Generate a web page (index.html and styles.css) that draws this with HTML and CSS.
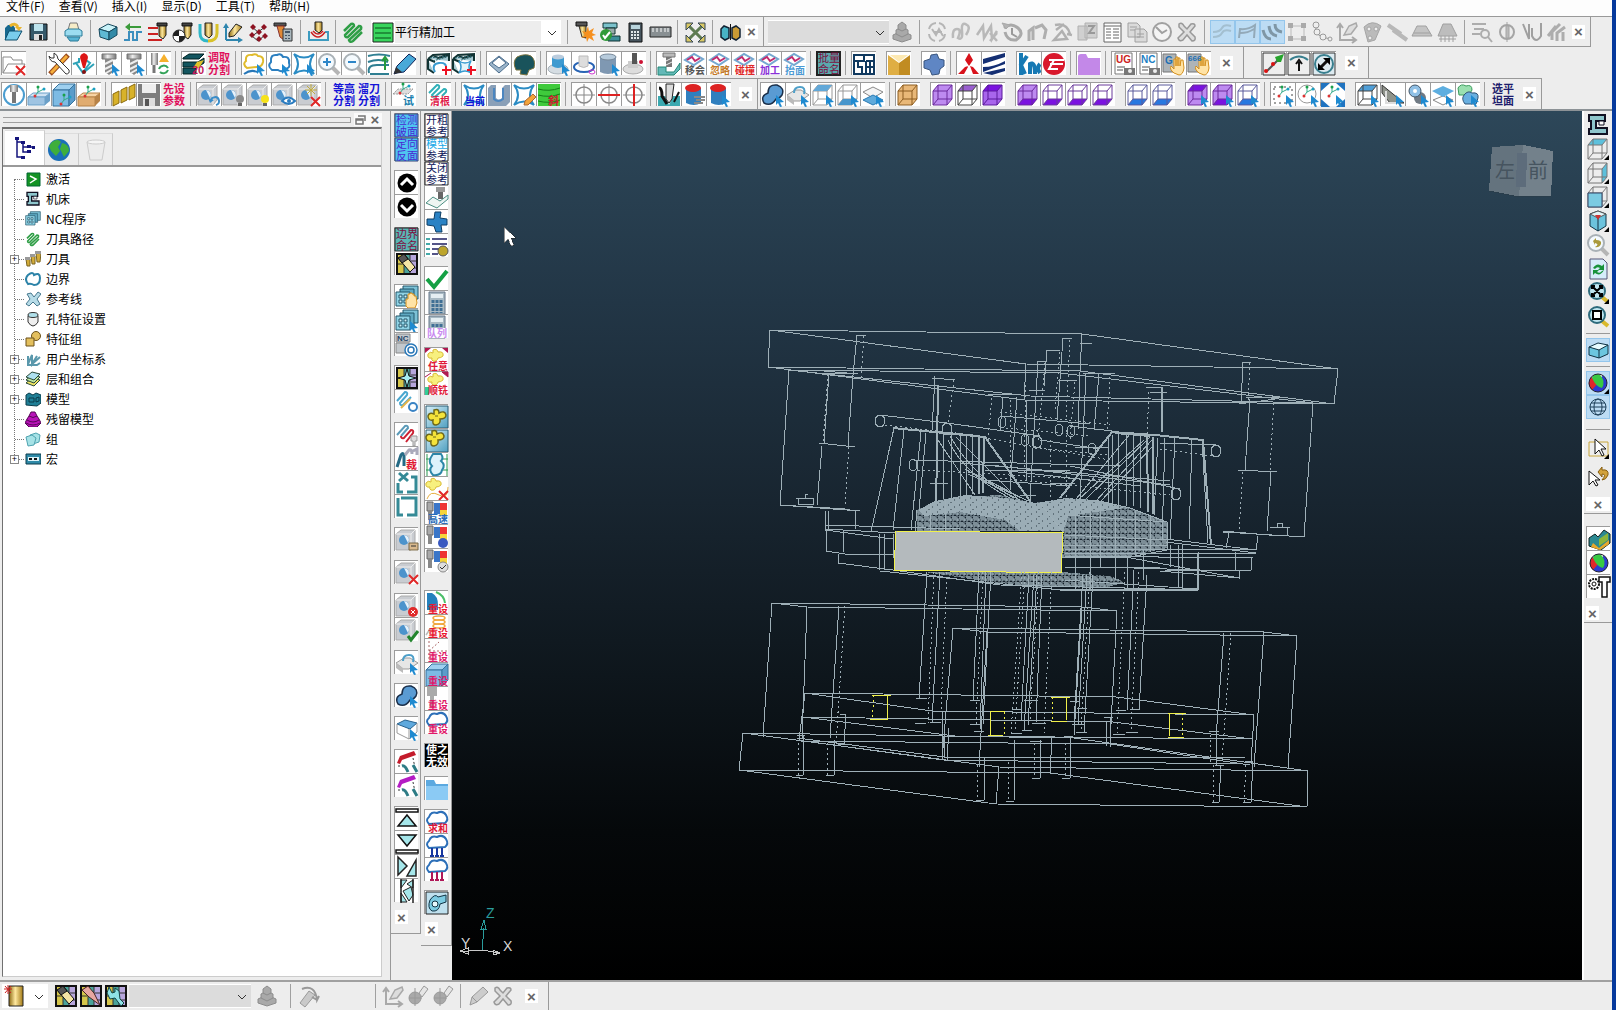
FILE: index.html
```html
<!DOCTYPE html>
<html lang="zh-CN">
<head>
<meta charset="utf-8">
<title>CAM</title>
<link rel="stylesheet" href="styles.css">
</head>
<body>
<svg class="sprite" aria-hidden="true">
<defs>
<linearGradient id="gold" x1="0" x2="1"><stop offset="0" stop-color="#8d6b14"/><stop offset=".45" stop-color="#ffe9a0"/><stop offset="1" stop-color="#a37a16"/></linearGradient>
<linearGradient id="steel" x1="0" x2="1"><stop offset="0" stop-color="#777"/><stop offset=".4" stop-color="#eee"/><stop offset="1" stop-color="#777"/></linearGradient>
<linearGradient id="sky" x1="0" y1="0" x2="1" y2="1"><stop offset="0" stop-color="#d9f0f8"/><stop offset="1" stop-color="#4e9fc0"/></linearGradient>
<pattern id="mesh" width="7" height="6" patternUnits="userSpaceOnUse"><path d="M0 0h7M0 2h5M1 4h6M1 0v6M3 0v4M5 1v5M6 2v3" stroke="#9fb2bb" stroke-width="1"/></pattern>
<pattern id="dense" width="11" height="7" patternUnits="userSpaceOnUse"><rect width="11" height="7" fill="#9badb6"/><path d="M2 1h1M8 3h1M5 5v1" stroke="#2a3943"/></pattern>

<g id="open"><path d="M4 8l3-3h5l2 3v12H4z" fill="#17688e"/><path d="M4 20l4-9h13l-5 9z" fill="#79cdec" stroke="#0d4d6b"/><path d="M9 6q5-4 8 1" stroke="#e9b52e" stroke-width="3" fill="none"/><path d="M14 7h7l-3 4z" fill="#e9b52e"/></g>
<g id="save"><path d="M4 4h17v16H4z" fill="#35596a" stroke="#111"/><path d="M8 4h9v7H8z" fill="#bde4ee"/><path d="M8 14h9v6H8z" fill="#ddd"/><path d="M13 15h3v5h-3z" fill="#222"/></g>
<g id="print"><path d="M7 10l2-7h7l2 7z" fill="#f6ecc8" stroke="#777"/><path d="M4 11l3-2h11l3 2v5H4z" fill="#9bdcf0" stroke="#2b7c99"/><path d="M6 17h13l-2 4H9z" fill="#58b4d4" stroke="#2b7c99"/></g>
<g id="block"><path d="M3 9l9-5 9 3-8 5z" fill="#c9f2f8" stroke="#17485c"/><path d="M3 9l10 3v8L4 17z" fill="#5fb9d3" stroke="#17485c"/><path d="M13 12l8-5v8l-8 5z" fill="#338ba8" stroke="#17485c"/></g>
<g id="rapid" fill="none"><path d="M3 20h5v-8h4v8h4v-8h5" stroke="#3c8fbe" stroke-width="2"/><path d="M20 7H8" stroke="#3b9b3b" stroke-width="2"/><path d="M9 3v8L4 7z" fill="#3b9b3b"/></g>
<g id="tool"><path d="M11 3h10v3H11z" fill="#444" stroke="#111"/><path d="M13 6h7v9l-3 4-4-3z" fill="url(#gold)" stroke="#222"/></g>
<g id="feeds"><path d="M2 8h10M2 14h10M2 20h14" stroke="#c22" stroke-width="2"/><use href="#tool"/></g>
<g id="ball"><use href="#tool"/><circle cx="8" cy="16" r="6" fill="#fff" stroke="#222"/><path d="M8 16V10a6 6 0 0 0-6 6zM8 16v6a6 6 0 0 0 6-6z" fill="#222"/></g>
<g id="leads" fill="none"><path d="M4 4v9q0 8 8 8" stroke="#2fb7c8" stroke-width="3"/><path d="M21 4v9q0 8-9 8" stroke="#d8c22a" stroke-width="3"/><path d="M9 3h7v12l-3 3-4-3z" fill="url(#gold)" stroke="#222"/></g>
<g id="axes"><path d="M5 20V6M5 20h15" stroke="#2e86ae" stroke-width="2"/><path d="M5 3l3 5H2zM22 20l-5 3v-6z" fill="#2e86ae"/><path d="M8 13l7-9 6 3-8 9-5 1z" fill="url(#gold)" stroke="#222"/></g>
<g id="dots"><path d="M6 7l6 5 7-5M12 12l-6 4 6 5 7-6" stroke="#333" fill="none"/><path d="M4 7l3-3 3 3-3 3zM15 7l3-3 3 3-3 3zM10 12l3-3 3 3-3 3zM3 15l3-3 3 3-3 3zM16 16l3-3 3 3-3 3zM10 19l3-3 3 3-3 3z" fill="#8d1322"/></g>
<g id="toolcalc"><path d="M3 3h12v3H3z" fill="#555" stroke="#222"/><path d="M6 6h7v14l-4-3z" fill="#e08936" stroke="#833"/><path d="M12 9h9v12h-9z" fill="#a9b7bd" stroke="#333"/><path d="M14 11h5v2h-5zM14 15h2v1h-2zM17 15h2v1h-2zM14 18h2v1h-2zM17 18h2v1h-2z" fill="#456"/></g>
<g id="sim" fill="none"><path d="M3 11v9h19v-8h-3" stroke="#3c9bc0" stroke-width="2"/><path d="M5 12q7 10 14 0M7 11q5 6 10 0" stroke="#c22" stroke-width="1.5"/><path d="M9 2h7v8l-3 3-4-3z" fill="url(#gold)" stroke="#222"/></g>
<g id="path" fill="none" stroke="#2f9e46" stroke-width="2.500"><path d="M3 11l7-7q3-1 3 2l-9 9q0 3 3 2L18 6q3 0 2 3L8 20q1 3 4 1l9-9"/></g>
<g id="pathrows"><path d="M2 3h20v19H2z" fill="#39d65d" stroke="#222"/><path d="M4 8h16M4 13h16M4 18h16" stroke="#0b4f1b"/></g>
<g id="toolstar"><path d="M3 2h11v4H3z" fill="#555" stroke="#111"/><path d="M6 6h7v12l-4-1z" fill="url(#gold)" stroke="#333"/><path d="M15 6l1 5 5-3-2 5 4 2-4 1 2 5-5-3-2 4-1-5-5 1 4-3-3-4 4 1z" fill="#f6901e"/></g>
<g id="toolcheck"><path d="M5 3h14v5H5z" fill="#7bc2cc" stroke="#133"/><path d="M8 8h9v6H8z" fill="#9aa" stroke="#133"/><path d="M10 16h12v5H10z" fill="#3d8e9a" stroke="#133"/><circle cx="8" cy="15" r="6" fill="#2f9b37"/><path d="M5 15l2 3 5-6" stroke="#fff" stroke-width="2" fill="none"/></g>
<g id="calc"><path d="M6 3h13v19H6z" fill="#47555e" stroke="#111"/><path d="M8 5h9v4H8z" fill="#b9d4dc"/><path d="M9 11v9M12 11v9M15 11v9" stroke="#dfe7ea" stroke-width="2" stroke-dasharray="2 1"/></g>
<g id="ruler"><path d="M2 7h21v10H2z" fill="#888f92" stroke="#222"/><path d="M5 8v4M9 8v4M13 8v4M17 8v4M20 8v4" stroke="#fff"/></g>
<g id="expand"><path d="M5 5l15 15M20 5L5 20" stroke="#5d7a50" stroke-width="3"/><path d="M3 3h7l-7 7zM22 3v7l-7-7zM3 22v-7l7 7zM22 22h-7l7-7z" fill="#d8c864" stroke="#345"/></g>
<g id="mirror"><path d="M3 9l3-3 5 2v10l-4 2-4-3z" fill="#48b3c6" stroke="#123" stroke-width="1.500"/><path d="M14 8l4-2 4 3v8l-4 3-4-2z" fill="#c99a34" stroke="#123" stroke-width="1.500"/><path d="M12.500 4v16" stroke="#111"/></g>
<g id="pile" fill="#a9a9a9" stroke="#8c8c8c"><path d="M3 15l9-4 9 4v4l-9 3-9-3z"/><path d="M6 10l6-3 6 3v4l-6 3-6-3z"/><path d="M8 5l4-3 4 3v4l-4 2-4-2z"/></g>
<g id="cycle" fill="none" stroke="#b5b5b5" stroke-width="2"><path d="M4 9a8 8 0 0 1 7-6M14 3a8 8 0 0 1 6 6M20 14a8 8 0 0 1-6 7M10 21a8 8 0 0 1-6-7M7 9l4 6 3-6 4 7M8 12h9"/></g>
<g id="wave" fill="none" stroke="#bababa" stroke-width="2.500"><path d="M3 18q-1-9 4-9t1 9q5 3 4-7t5-6q4 2-1 10"/></g>
<g id="wavex" fill="none" stroke="#b8b8b8" stroke-width="2.500"><path d="M2 15l6-9 1 12 7-12 1 13 5-8M15 13l7 8M22 13l-7 8"/></g>
<g id="rot" fill="none" stroke="#a9a9a9" stroke-width="3"><path d="M4 8q7-6 14 0t-2 12q-9 1-11-8"/><path d="M12 8v6l5 3" stroke="#999" stroke-width="2"/><path d="M2 3l4 6 4-4z" fill="#b3b3b3" stroke-width="1"/></g>
<g id="arch" fill="none" stroke="#aeaeae" stroke-width="3"><path d="M4 21V11l4-3v12M10 8l7-3 4 5-2 9"/></g>
<g id="swap" fill="none" stroke="#b0b0b0" stroke-width="2.500"><path d="M5 5q12-3 15 9M4 20l8-9 5 8zM6 10l8-6M17 14l5 1"/></g>
<g id="sheet" fill="#d0d0d0" stroke="#b0b0b0"><path d="M3 6h9v14H3zM10 3h12v15H10z"/><path d="M13 6h6l-5 7h6" fill="none" stroke="#999" stroke-width="2"/></g>
<g id="list" fill="#fff" stroke="#666"><path d="M4 3h17v19H4z"/><path d="M4 6h17M6 9h5M13 9h6M6 12h5M13 12h6M6 15h5M13 15h6M6 18h5M13 18h6"/></g>
<g id="copy" fill="#dadada" stroke="#a0a0a0"><path d="M3 3h9l3 3v11H3zM10 9h9l3 3v10H10z"/><path d="M5 7h7M5 10h5M12 14h7M12 17h7"/></g>
<g id="clock" fill="#f4f4f4" stroke="#a0a0a0" stroke-width="2"><circle cx="12" cy="12" r="9"/><path d="M6 7l6 6 5-3" fill="none"/></g>
<g id="xx" fill="#ddd" stroke="#999" stroke-width="1.500"><path d="M4 4q3-2 5 2l3 3 4-5q4-1 4 2l-5 6 5 5q1 4-3 4l-5-6-4 5q-4 2-5-2l6-6-5-5z"/></g>
<g id="hl-lines" fill="none" stroke="#a3bfd0" stroke-width="2"><path d="M3 17q7 0 9-4t9-2M3 12q7 0 9-4t9-2"/></g>
<g id="hl-arm" fill="none" stroke="#93a9b8" stroke-width="2"><path d="M4 18l1-9q8 1 15-4l-1 13M5 13q8 0 14-4"/></g>
<g id="hl-arcs" fill="none" stroke="#7f97a6" stroke-width="3"><path d="M3 10q2 9 8 9M9 6q1 9 8 10M15 4q0 7 7 8"/></g>
<g id="nodes"><path d="M6 6h13M6 19h13M6 6v13M19 6v13" stroke="#bbb"/><path d="M3 3h5v5H3zM16 3h5v5h-5zM3 16h5v5H3zM16 16h5v5h-5z" fill="#aaa"/></g>
<g id="curve" fill="#eee" stroke="#999"><path d="M6 6q-3 11 15 13" fill="none"/><circle cx="6" cy="5" r="3"/><circle cx="7" cy="12" r="3"/><circle cx="13" cy="17" r="3"/><circle cx="20" cy="19" r="2"/></g>
<g id="axpen" fill="none" stroke="#a9a9a9" stroke-width="2"><path d="M5 4v16h16M2 8l3-4 3 4M17 17l4 3-4 3"/><path d="M9 15l5-9 7-3 1 3-6 8z" fill="#ddd" stroke-width="1.500"/></g>
<g id="fan" fill="#bbb" stroke="#a5a5a5"><path d="M4 7q8-8 17-1l-6 14-7 2z"/><circle cx="9" cy="9" r="2" fill="#eee"/><circle cx="16" cy="9" r="2" fill="#eee"/><circle cx="10" cy="18" r="2" fill="#eee"/></g>
<g id="slash" stroke="#b8b8b8" stroke-width="4"><path d="M3 5l13 9M8 10l14 10"/></g>
<g id="trap" fill="#c4c4c4" stroke="#a0a0a0"><path d="M7 6h9l6 10H2zM4 13h16"/></g>
<g id="trap2" fill="#bdbdbd" stroke="#a0a0a0"><path d="M8 4h8l6 12H3z"/><path d="M4 19h17M6 16v6M10 16v6M14 16v6M18 16v6"/></g>
<g id="find" fill="none" stroke="#adadad" stroke-width="2"><path d="M2 4h14M4 9h10M2 14h8"/><circle cx="15" cy="14" r="4"/><path d="M18 17l4 5"/></g>
<g id="circ" fill="none" stroke="#a5a5a5"><circle cx="12" cy="12" r="7" stroke-width="2"/><path d="M12 2v20"/><path d="M11 6h3v12h-3z" fill="#bbb"/></g>
<g id="uu" fill="none" stroke="#a0a0a0" stroke-width="2"><path d="M3 4l6 15V4M12 8v8q4 8 9 0V3"/></g>
<g id="hatch" fill="none" stroke="#adadad" stroke-width="3"><path d="M3 16l8-10M7 20V12l8-8M12 21v-8l8-6M18 21v-9"/></g>
<g id="pencil" fill="#ccc" stroke="#999"><path d="M4 21l2-8L17 3l5 5L11 18z"/><path d="M6 13l5 5" fill="none"/></g>

<g id="arrow"><path d="M15 12l8 7-4 .5 2 4-2 .5-2-4-2 2z" fill="#1f8ad0"/></g>
<g id="redx"><path d="M14 14l9 9M23 14l-9 9" stroke="#e02828" stroke-width="2"/></g>
<g id="folderx"><path d="M1 21V5h8l2 3h9v4M1 21l5-9h17l-5 9z" fill="none" stroke="#8a8a8a"/><use href="#redx"/></g>
<g id="wrench"><path d="M3 22L21 3" stroke="#9a4a1b" stroke-width="5"/><path d="M4 21L20 4" stroke="#f5ae3c" stroke-width="3"/><path d="M2 4q1 6 6 6l11 12q4 0 3-4L11 7q0-4-4-6v5H4z" fill="#fff" stroke="#333"/></g>
<g id="pinred"><path d="M4 11l7 10 11-9M1 12l6-2v-4M14 8l4 3-7 9" fill="none" stroke="#2ea3b8" stroke-width="2"/><path d="M12 1q6 2 3 8l-2 7h-2L9 9q-3-6 3-8z" fill="#dd1515"/><circle cx="12" cy="20" r="2" fill="#811"/></g>
<g id="drill"><path d="M5 2h14v5H5z" fill="url(#steel)" stroke="#777"/><path d="M8 7h8v13l-4 3-4-3z" fill="#888"/><path d="M8 12l8-4M8 17l8-4M9 21l7-4" stroke="#eee" stroke-width="2"/></g>
<g id="drillc"><use href="#drill"/><use href="#arrow"/></g>
<g id="drillw"><path d="M4 1h7v12H4z" fill="url(#steel)"/><path d="M7 13v8" stroke="#777" stroke-width="3"/><path d="M17 2l5 8H12z" fill="#f6b02c"/><path d="M12 17a5 5 0 0 1 9-1M21 18a5 5 0 0 1-8 2" fill="none" stroke="#35a35a" stroke-width="2"/></g>
<g id="stack"><path d="M1 6l6-4h15l-5 5H1zM1 16h13v6H1zM1 10h15l6-4v5l-6 4H1z" fill="#12555f" stroke="#022"/><path d="M15 10l7-2-5 8h-6z" fill="#e0c22a"/></g>
<g id="cloud"><path d="M5 18q-5-4-1-8-1-8 6-7 4-2 6 2 7-1 6 6 2 5-4 6-3 4-7 1z" fill="none" stroke-width="2"/></g>
<g id="cloudy"><path d="M5 16q-5-4-1-7-1-7 6-6 4-2 6 1 6 0 5 6-1 5-6 5z" fill="none" stroke="#e0bb2c" stroke-width="2"/><path d="M2 22q7-5 13-2" stroke="#2777b8" fill="none" stroke-width="2"/><use href="#arrow"/></g>
<g id="cloudb"><use href="#cloud" stroke="#2b7fc0"/><use href="#arrow"/></g>
<g id="star4"><path d="M2 2q10 7 20 0q-8 10 0 20q-10-7-20 0q8-10 0-20z" fill="none" stroke="#2b8cc4" stroke-width="2"/></g>
<g id="mag"><path d="M15 15l7 7" stroke="#b5b5b5" stroke-width="4"/><circle cx="10" cy="10" r="8" fill="#f4fafe" stroke="#a9b1b6" stroke-width="2"/></g>
<g id="flow" fill="none" stroke="#2f7f92" stroke-width="2"><path d="M1 4q11-3 22 0M1 10q11-4 20 0M2 21q-2-8 8-8h12M3 22h19"/><path d="M18 18V7M15 9l3-4 3 4" stroke="#249a3b"/></g>
<g id="pen"><path d="M2 22l3-8L17 2l7 5-12 13-7 1z" fill="#49a9d8" stroke="#125"/><path d="M2 22l2-7 6 5z" fill="#333"/></g>
<g id="dblock"><path d="M1 7l5-4 16-1v7M1 7v10l6 4M1 7l7 3M6 3l5 3 11-3" fill="#a6c9d1" stroke="#133" stroke-width="2"/><path d="M3 6l16-2M6 9l14-4" stroke="#2c6a75" stroke-dasharray="2 1"/></g>
<g id="redplus"><path d="M19 14v9M15 18h9" stroke="#e12" stroke-width="2"/></g>
<g id="rhomb"><path d="M12 4l10 8-10 9L2 12z" fill="#9db6cb" stroke="#4d6f8f"/><path d="M12 5l7 6-7 5-7-5z" fill="#fff" stroke="#4d6f8f"/></g>
<g id="darkblob"><path d="M4 18q-4-8 1-13 8-4 14-1 5 4 3 12l-5 2-2 5-7-1 1-4z" fill="#19535b" stroke="#7c7440" stroke-width="1"/></g>
<g id="disc"><ellipse cx="11" cy="17" rx="10" ry="5" fill="#d5dde3" stroke="#a6b0b8"/><path d="M5 5h12v9q-6 4-12 0z" fill="#3e9ad0"/><ellipse cx="11" cy="5" rx="6" ry="2.500" fill="#bcd"/></g>
<g id="ring"><ellipse cx="12" cy="15" rx="10" ry="5" fill="none" stroke="#2763b4" stroke-width="2"/><path d="M7 4h9v10q-4 3-9 0z" fill="#ddd" stroke="#bbb"/><ellipse cx="20" cy="20" rx="3" ry="2" fill="none" stroke="#c3c"/></g>
<g id="cyl"><path d="M3 5v15q8 4 16 0V5z" fill="#7f98b2"/><ellipse cx="11" cy="5" rx="8" ry="3" fill="#b7cbdc" stroke="#789"/></g>
<g id="bcyl"><path d="M4 5v15q8 4 15 0V5z" fill="#2f7fbf"/><ellipse cx="11" cy="5" rx="8" ry="4" fill="#d22"/></g>
<g id="discdrill"><ellipse cx="11" cy="17" rx="10" ry="5" fill="#ddd" stroke="#aaa"/><path d="M6 9h10v7H6z" fill="#ccc"/><path d="M10 1h5v11h-5z" fill="#555"/><circle cx="19" cy="10" r="2" fill="#c13"/></g>
<g id="ucut"><path d="M1 15h8v5h8l6-9v6l-6 6H1z" fill="#64b9b8" stroke="#287" /><path d="M6 1h12v4H6z" fill="#bbb" stroke="#777"/><path d="M9 5h6v10H9z" fill="#777"/><path d="M9 9l6-3M9 13l6-3" stroke="#eee"/></g>
<g id="ppath" fill="none" stroke-width="2"><path d="M3 8l9-6 9 5-9 6z" stroke="#75a8d0"/><path d="M5 8l5-3 3 4 5-3" stroke="#c22a6d"/></g>
<g id="fixture" fill="none" stroke="#10395f" stroke-width="2"><path d="M2 3h20v19H2z" fill="#fff"/><path d="M2 9h4v6h4v7M6 9h6V4M14 9h8M14 15h8M14 9v13M18 9v12"/></g>
<g id="env"><path d="M1 3l11 8v12H1z" fill="#dfae43"/><path d="M23 3l-11 8v12h11z" fill="#c18c22"/><path d="M3 3h18l-9 7z" fill="#fde9b2"/></g>
<g id="plus3d"><path d="M9 3l6-1 2 5 5 1v6l-4 3-1 5-7 1-2-5-6-2V9l6-2z" fill="#5f86c4" stroke="#39557e"/></g>
<g id="mitsu" fill="#d8121b"><path d="M12 1l4 7-4 6-4-6zM8 15h3l-4 7H1zM8 15l3-1-4 8H1zM13 14l3 1 6 7h-6z"/></g>
<g id="wing" fill="#142f73"><path d="M1 7l22-6v4L1 12zM1 15q11 0 22-6v3L1 20zM1 21l22-5v3L10 23z"/></g>
<g id="hnc" fill="none" stroke="#1679b4" stroke-width="4"><path d="M4 1v22M10 4L4 13l4 9M13 22V12q5-3 5 10M23 12q-4 4 0 9"/></g>
<g id="redlogo"><circle cx="12" cy="12" r="11" fill="#d9182c"/><path d="M7 8h15M8 12h13M12 8l-5 9h9" stroke="#fff" stroke-width="2" fill="none"/></g>
<g id="pfolder"><path d="M1 5q0-3 3-3h5l2 4h12v17H1z" fill="#c388e8"/></g>
<g id="card"><path d="M3 1h17v21H3z" fill="#fff" stroke="#777"/><path d="M5 15h8M5 18h6" stroke="#555"/><path d="M12 16h11v7H12z" fill="#777"/><circle cx="18" cy="19" r="2" fill="#eee"/></g>
<g id="hand"><path d="M1 2h13v18H1z" fill="#aeb4b8" stroke="#777"/><path d="M12 21q-5-4-3-7l3 3V7h2v7V5h2v9V6h2v8l1-6h2l1 8q-1 7-5 7z" fill="#ffe3a6" stroke="#d38f1c"/></g>
<g id="seg"><path d="M1 1h22v22H1z" fill="#eee" stroke="#333"/><path d="M4 20L17 7" stroke="#555" stroke-width="2"/><path d="M13 5l9-3-3 8-4 0z" fill="#27a32d"/><circle cx="4" cy="19" r="2" fill="#d11"/><circle cx="11" cy="12" r="2" fill="#d11"/></g>
<g id="uparc"><path d="M1 1h22v22H1z" fill="#eee" stroke="#333"/><path d="M3 8q9-7 18 0" stroke="#397f8e" fill="none" stroke-width="2"/><path d="M12 19V10M9 12l3-4 3 4" stroke="#111" stroke-width="2" fill="none"/></g>
<g id="diam"><path d="M1 1h22v22H1z" fill="#dceaf0" stroke="#333"/><circle cx="12" cy="12" r="9" fill="none" stroke="#397f8e" stroke-width="2"/><path d="M8 16l8-8" stroke="#111" stroke-width="3"/><path d="M11 6h7v7zM6 11v7h7z"/></g>

<g id="drillring"><circle cx="12" cy="12" r="10" fill="none" stroke="#4b9dd0" stroke-width="2"/><path d="M8 2h8v7H8z" fill="url(#steel)"/><path d="M10 9h4v11h-4z" fill="#777"/></g>
<g id="tri"><path d="M11 9V4M11 9l6-3M11 9l-3 4" stroke="#3a8"/><circle cx="11" cy="4" r="1.500" fill="#1aa04a"/><circle cx="17" cy="6" r="1.500" fill="#1aa0c4"/><circle cx="8" cy="13" r="1.500" fill="#d33"/></g>
<g id="slab"><path d="M1 14l5-4h17l-5 4z" fill="#cfe2f2" stroke="#6ba0c8"/><path d="M1 14h17v8H1z" fill="#9fc4e2" stroke="#6ba0c8"/><path d="M18 14l5-4v8l-5 4z" fill="#6ba0c8"/></g>
<g id="bluebox"><path d="M1 7l6-6h16l-6 6z" fill="#9fd0ef" stroke="#36739e"/><path d="M1 7h16v16H1z" fill="#7dbbe4" stroke="#36739e"/><path d="M17 7l6-6v16l-6 6z" fill="#5b9cca" stroke="#36739e"/></g>
<g id="obox"><path d="M1 14l5-4h17l-5 4z" fill="#f7d3a4" stroke="#b78348"/><path d="M1 14h17v9H1z" fill="#e0ac70" stroke="#b78348"/><path d="M18 14l5-4v8l-5 5z" fill="#b78348"/></g>
<g id="bars"><path d="M1 11l6-3v12l-6 3z" fill="#d8b22a" stroke="#8a6a10"/><path d="M9 7l6-3v13l-6 3z" fill="#d8b22a" stroke="#8a6a10"/><path d="M17 4l6-3v13l-6 3z" fill="#d8b22a" stroke="#8a6a10"/></g>
<g id="gsave"><path d="M1 1h22v22H1z" fill="#7d7d7d"/><path d="M5 1h14v9H5z" fill="#eee"/><path d="M6 15h12v8H6z" fill="#ddd"/><path d="M8 16h4v7H8z" fill="#555"/></g>
<g id="hole"><path d="M1 6l5-4h14v15l-4 5H1z" fill="#c9ccd1" stroke="#aaa"/><path d="M16 6l4-4M1 6h15v16" fill="none" stroke="#eee"/><circle cx="9" cy="12" r="5" fill="#4c93cc"/><path d="M9 7a5 5 0 0 1 4 8z" fill="#e7f1fa"/></g>
<g id="undo"><path d="M14 18a4 4 0 1 1 5 4" fill="none" stroke="#3a8dc9" stroke-width="2"/><path d="M11 15l2 5 4-3z" fill="#3a8dc9"/></g>
<g id="bulb"><circle cx="18" cy="16" r="4"/><path d="M16 20h4v3h-4z" fill="#666"/></g>
<g id="eye"><path d="M10 18q6-7 13 0-6 6-13 0z" fill="#fff" stroke="#2b7cc0" stroke-width="2"/><circle cx="17" cy="18" r="2" fill="#2b7cc0"/></g>
<g id="spark"><path d="M14 1v12M8 7h12M10 3l8 8M18 3l-8 8" stroke="#c0ab3e"/></g>
<g id="zig"><path d="M2 10l8-8q3 0 2 3l-7 7q1 3 4 1l8-7q3 0 2 3l-4 4" fill="none" stroke="#2fb0b8" stroke-width="2"/></g>
<g id="slot"><path d="M1 5l3-3h5v13q3 3 6 0V5l3-3h5v17l-4 4H1z" fill="#8aa0b8"/><path d="M7 5v11q4 4 9 0V5" fill="none" stroke="#4b86c0" stroke-width="2"/></g>
<g id="spen"><use href="#star4"/><path d="M12 22l1-4 8-7 3 3-8 8z" fill="#f3a43a" stroke="#a63"/></g>
<g id="green"><path d="M1 1h22v22H1z" fill="#3fca3c"/><path d="M1 6q11 3 22-1M1 12q11 3 22-1M1 18q11 3 22-1" stroke="#148018" fill="none"/></g>
<g id="target" fill="none" stroke="#888"><circle cx="12" cy="12" r="8" stroke-width="1.500"/><path d="M12 1v22M1 12h22"/></g>
<g id="vdrill"><path d="M1 13h7l4 9 4-9h7v10H1z" fill="#3aa9b0"/><path d="M2 5q3 0 3 8l5 8" stroke="#111" stroke-width="3" fill="none"/><path d="M9 1h8l-2 15-3 4-3-4z" fill="#ddd" stroke="#222"/><path d="M22 9l-5 10" stroke="#111" stroke-width="2"/></g>
<g id="blob2"><path d="M3 20q-4-7 4-10 0-9 9-8 8 3 5 10-3 4-6 4-5 8-12 4z" fill="#5a9bd3" stroke="#1a2f4a" stroke-width="1.500"/><use href="#arrow"/></g>
<g id="gslab"><path d="M1 12l8-5h6l8 5-9 6H8z" fill="#e6e6e6" stroke="#999"/><path d="M8 10q0-6 6-6t4 7" fill="none" stroke="#4d9fc9" stroke-width="2"/><path d="M1 12l7 5v5l-7-5z" fill="#bbb"/></g>
<g id="wire" fill="none"><path d="M2 8h14v14H2zM7 2h14v14H7zM2 8l5-6M16 8l5-6M16 22l5-6M2 22l5-6"/></g>
<g id="ftop"><path d="M2 8l5-6h14l-5 6z"/></g>
<g id="fbot"><path d="M2 22l5-6h14l-5 6z"/></g>
<g id="ffull"><path d="M2 8l5-6h14v14l-5 6H2z"/></g>
<g id="layer"><path d="M12 4l10 5-10 6L2 9z" fill="#f4f4f4" stroke="#888"/><path d="M12 12l10 5-10 5-10-5z" fill="#5faadb" stroke="#2a7ab3"/></g>
<g id="dashsel"><path d="M3 4h18v16H3z" fill="none" stroke="#444" stroke-dasharray="2 3"/><use href="#tri"/><use href="#arrow"/></g>
<g id="circsel"><circle cx="11" cy="11" r="9" fill="none" stroke="#999"/><use href="#tri"/><use href="#arrow"/></g>
<g id="corners"><path d="M0 0h9L0 8zM24 0v8l-9-8zM0 24v-8l9 8zM24 24h-9l9-8z" fill="#1f73c0"/><use href="#tri"/></g>
<g id="blend"><path d="M1 2l22 18H9L1 10z" fill="#8f938b" stroke="#333"/><path d="M5 8v12h12" fill="none" stroke="#ddd" stroke-width="2"/><use href="#arrow"/></g>
<g id="gear"><circle cx="14" cy="15" r="6" fill="#707a84"/><circle cx="9" cy="8" r="6" fill="#8fc0e6" stroke="#456"/><circle cx="9" cy="8" r="2" fill="#fff"/><use href="#arrow"/></g>
<g id="layers2"><path d="M12 13l10 4-10 5-10-5z" fill="#fff" stroke="#888"/><path d="M12 3l11 5-11 6L1 8z" fill="#5daee0"/><use href="#arrow"/></g>
<g id="clouds"><path d="M2 5q3-5 8-2 6-2 6 4l-3 5H3z" fill="#9be0b0" stroke="#3a9c5c"/><path d="M8 12q4-5 8-2 7-1 6 5l-2 6H9q-4-5-1-9z" fill="#69afe0" stroke="#357"/><use href="#arrow"/></g>

<g id="up"><circle cx="12" cy="12" r="9.500"/><path d="M6 14l6-6 6 6" stroke="#fff" stroke-width="3" fill="none"/></g>
<g id="down"><circle cx="12" cy="12" r="9.500"/><path d="M6 10l6 6 6-6" stroke="#fff" stroke-width="3" fill="none"/></g>
<g id="board"><path d="M2 2h20v20H2z" fill="#4aa39a" stroke="#111" stroke-width="2"/><path d="M3 3h6v18H3z" fill="#d5c64a"/><path d="M15 3h6v18h-6z" fill="#b7a6dc"/><path d="M3 12h5M16 9h5M16 16h5M9 3v18M15 3v18" stroke="#333"/></g>
<g id="torch"><use href="#board"/><path d="M4 7l6-4 10 12-5 5z" fill="#f4e5a5" stroke="#111"/><path d="M3 6l6-4 4 5-6 4z" fill="#555" stroke="#111"/></g>
<g id="brush"><use href="#board"/><path d="M3 6l6-4 6 7 6 12-11-8z" fill="#e8a7a0" stroke="#422"/></g>
<g id="spanner"><use href="#board"/><path d="M5 3l3 6 3-1v-4l4 3 1 8 4 4-3 3-6-8-5 1-3-6z" fill="#8fe3e6" stroke="#144"/></g>
<g id="spark4"><use href="#board"/><path d="M12 3l2 7 7 2-7 2-2 7-2-7-7-2 7-2z" fill="#a6ecf0" stroke="#111"/></g>
<g id="pages" stroke="#23566a"><path d="M8 1h15v13H8z" fill="#7cc1d6"/><path d="M5 4h14v13H5z" fill="#5fa9c2"/><path d="M1 7h14v14H1z" fill="#8fd2e4"/><path d="M4 10h3v3H4zM9 10h3v3H9zM4 15h3v3H4zM9 15h3v3H9z" fill="#cdeef6"/></g>
<g id="pagehand"><use href="#pages"/><path d="M11 21v-7h2v-5h2v-1h2v1h2v2h2l1 7-2 5h-7z" fill="#ffe3a6" stroke="#d38f1c"/></g>
<g id="ncspiral"><path d="M1 1h14v8H1zM1 10h13v10H1z" fill="#c3c8cc" stroke="#888"/><circle cx="16" cy="17" r="6" fill="#fff" stroke="#2a78b8" stroke-width="1.500"/><circle cx="16" cy="17" r="3" fill="none" stroke="#2a78b8" stroke-width="1.500"/></g>
<g id="linkp" fill="none" stroke-width="2"><path d="M2 11l8-9q3 0 2 3l-7 8q0 3 3 2l8-8" stroke="#4aa8d0"/><path d="M6 18l9-9" stroke="#e3b34a"/><circle cx="18" cy="17" r="4" stroke="#3a83c4"/></g>
<g id="snake" fill="none" stroke-width="2"><path d="M2 12l8-9q3-1 3 2l-7 8" stroke="#5a9ab8"/><path d="M6 13q0 3 3 2l7-8q3 0 2 3l-7 9" stroke="#c23"/><path d="M16 13h6v5h-2v5h-2v-5h-2z" stroke="#999" stroke-width="1" fill="#ddd"/></g>
<g id="trim" fill="none" stroke-width="3"><path d="M2 20l4-12q2-3 3 0v11" stroke="#256b86"/><path d="M10 8l4-5q3-1 3 4M18 4l4-2v6" stroke="#aab"/></g>
<g id="boxx" fill="none" stroke="#358a96" stroke-width="3"><path d="M12 21h9V6h-5M3 12v9h5M4 2l9 8M13 2l-9 8"/></g>
<g id="boxo" fill="none" stroke="#358a96" stroke-width="3"><path d="M6 3h15v17h-9M3 3v17h5"/></g>
<g id="minus"><path d="M14 15h9v7h-9z" fill="#d9b98d" stroke="#764"/><path d="M16 18h5" stroke="#333"/></g>
<g id="stop"><circle cx="18" cy="18" r="5" fill="#e02a2a"/><path d="M16 16l4 4M20 16l-4 4" stroke="#fff"/></g>
<g id="tick"><path d="M13 18l3 4 7-9" stroke="#23852d" stroke-width="3" fill="none"/></g>
<g id="table"><path d="M2 7l8-4 12 3-7 6z" fill="#5fa9dd" stroke="#27618d"/><path d="M2 7v9l12 6V12M22 6v9l-8 7" fill="none" stroke="#999"/></g>
<g id="clamp"><path d="M2 13l3-7 14-5 2 4-14 5-2 4z"/><path d="M4 15v4M18 8l2 10" stroke="#333" stroke-dasharray="2 2" fill="none"/><path d="M7 16q3-1 6 6M18 15l4 7" stroke="#2e7c85" stroke-width="3" fill="none"/></g>
<g id="yplus"><path d="M8 2q4-2 5 2 6-1 5 4-2 2-5 2-1 4-5 3-2-1-1-3-5 1-4-4 2-3 5-1z" fill="#f7f07e" stroke="#d9bb34"/></g>
<g id="yblob"><path d="M9 5q5-2 5 3 6-3 7 2 0 4-6 4 1 5-4 6-4 0-3-5-5 1-5-4 1-4 6-2z" fill="#f4e33a" stroke="#6e681a" stroke-width="1.500"/><path d="M10 11h3" stroke="#6e681a"/></g>
<g id="skysq"><path d="M1 1h22v22H1z" fill="url(#sky)" stroke="#2a5a70"/></g>
<g id="peanut"><path d="M8 1h8q3 4 0 7 5 4 1 9-1 6-9 5-5-5-1-9-5-4 1-12z" fill="#ddf3fb" stroke="#2b86a8" stroke-width="2"/></g>
<g id="hs"><path d="M2 1h6v9H2z" fill="#aaa" stroke="#666"/><path d="M3 10h4v9H3z" fill="#888"/><path d="M9 2h6v11H9z" fill="#3a76c8"/><path d="M15 2h7v7h-7z" fill="#e33"/><path d="M15 9h7v6h-7z" fill="#f5d43a"/></g>
<g id="ok"><circle cx="18" cy="18" r="5" fill="#ddd" stroke="#888"/><path d="M15 18l2 2 4-4" stroke="#333" fill="none"/></g>
<g id="bluetool"><path d="M2 2h5q6 3 6 12v5H2z" fill="#2480bd"/><path d="M11 1q8 3 9 11" fill="none" stroke="#4cbf6a" stroke-width="2"/></g>
<g id="coil" fill="none" stroke="#f0a63b" stroke-width="1.500"><ellipse cx="14" cy="3" rx="6" ry="2"/><ellipse cx="14" cy="7" rx="6" ry="2"/><ellipse cx="14" cy="11" rx="6" ry="2"/><path d="M1 20l4-6h5" stroke="#bbb"/></g>
<g id="lcloud"><path d="M4 14q-4-4 0-7 2-6 8-4 6-3 9 2 3 5-1 8z" fill="none" stroke="#2c6fb8" stroke-width="2"/></g>
<g id="bfolder"><path d="M1 3h8l2 4h12v16H1z" fill="#5ba9e0"/><path d="M1 9h22v14H1z" fill="#8bcaf4"/></g>
<g id="list2"><path d="M1 5h4M1 10h4M1 15h4M1 20h4" stroke="#4aa" stroke-width="2"/><path d="M7 5h15M7 10h15M7 15h9M7 20h6" stroke="#558" stroke-width="2"/><circle cx="18" cy="17" r="5" fill="#bda52c" stroke="#555"/></g>
<g id="calc2"><path d="M4 1h16v22H4z" fill="#a9bac4" stroke="#678"/><path d="M6 3h12v4H6z" fill="#e5eef2"/><path d="M8 9v13M12 9v13M16 9v13" stroke="#3f6f94" stroke-width="3" stroke-dasharray="3 1"/></g>
<g id="check"><path d="M2 12l7 8L22 4" stroke="#14a044" stroke-width="4" fill="none"/></g>
<g id="bplus"><path d="M10 2h6l-1 6 7 1v6h-6l1 7h-6l-2-6-7-1V9h7z" fill="#2a82c4" stroke="#0d3d63"/></g>
<g id="cutfix"><path d="M1 17l11 5 11-9v-4l-8 6-7-4z" fill="#eef5f2" stroke="#4c8f83"/><path d="M11 1h9v5h-9z" fill="#999"/><path d="M13 6h5v7h-5z" fill="#666"/></g>
<g id="t1" fill="#a5e6ea" stroke="#111" stroke-width="1.500"><path d="M1 2h22v3H1z" fill="#fff"/><path d="M12 8l9 11H3z"/></g>
<g id="t2" fill="#a5e6ea" stroke="#111" stroke-width="1.500"><path d="M1 19h22v3H1z" fill="#fff"/><path d="M12 15L3 4h18z"/></g>
<g id="t3" fill="#a5e6ea" stroke="#222" stroke-width="1.500"><path d="M3 2l9 9-9 9zM21 5v16h-9z"/></g>
<g id="t4" fill="#a5e6ea" stroke="#222"><path d="M6 1h6l-6 8zM18 1v8l-6-4zM8 12l8-4 2 8-4 6zM6 14v9h6z"/><path d="M6 0v24M18 0v24" fill="none" stroke-width="1.500"/></g>
<g id="wrap"><path d="M1 1h22v22H1z" fill="#bfe0ee" stroke="#222"/><path d="M5 9q5-7 8-3l8-2v7l-6 2q-1 8-8 7-5-3-2-11z" fill="#7ccbe2" stroke="#134"/><circle cx="10" cy="13" r="3" fill="#e6f7fb" stroke="#134"/></g>

<g id="machine"><path d="M3 2h16v6H10v7h11v6H3v-5h2V8H3z" fill="#8ec6cc" stroke="#112" stroke-width="2"/><path d="M13 8h5v4h-5z" fill="#fff" stroke="#112"/></g>
<g id="corner"><path d="M23 18v5h-5z"/></g>
<g id="iso"><path d="M12 2l8 3v12l-8 5-8-5V5z" fill="#6cc3dd" stroke="#134"/><path d="M4 5l8 4 8-4-8-3z" fill="#e3f4f8" stroke="#555"/><path d="M12 9v13" stroke="#134" fill="none"/><path d="M9 6h6l-3 5z" fill="#c33"/></g>
<g id="magp"><path d="M16 16l6 5" stroke="#d9b92d" stroke-width="4"/><circle cx="11" cy="10" r="8" fill="#bfe5ef" stroke="#2e6b7c" stroke-width="2"/></g>
<g id="refresh"><path d="M4 2h13l4 4v16H4z" fill="#d6ecfa" stroke="#557"/><path d="M7 11q4-6 9-2l2-2v6h-6l2-2q-3-2-5 1zM18 13q-4 7-9 3l-2 2v-5h6l-2 2q3 2 5-1z" fill="#17923a"/></g>
<g id="obox3"><path d="M3 9l9-4 10 2-9 5z" fill="#e6fbff"/><path d="M3 9l10 3v8L3 17zM13 12l9-5v9l-9 4z" fill="#6cc6df"/><path d="M3 9l9-4 10 2-9 5zv8l10 3v-8M22 7v9l-9 4" fill="none" stroke="#134"/></g>
<g id="rgb"><circle cx="12" cy="12" r="9" fill="#2b3bd0"/><path d="M12 12L5 6a9 9 0 0 1 12-2z" fill="#ddd"/><path d="M12 12L5 6q-5 7 1 13z" fill="#e0262a"/><path d="M14 4a5 5 0 0 0-8 3q4 9 10 10 4-7-2-13z" fill="#38c943"/><circle cx="12" cy="12" r="9" fill="none" stroke="#223"/></g>
<g id="globe" fill="none" stroke="#1d3f58"><circle cx="12" cy="12" r="8"/><ellipse cx="12" cy="12" rx="4" ry="8"/><path d="M4 12h16M5 8h14M5 16h14"/></g>
<g id="selc"><path d="M3 6h19v14H3z" fill="none" stroke="#c8a63a"/><path d="M9 3v15l4-4 3 6 2-1-3-6h5z" fill="#fff" stroke="#111"/></g>
<g id="selu"><path d="M3 6v14l4-4 3 5 2-1-3-5h5z" fill="#fff" stroke="#111"/><path d="M12 7l4-5v3q7-1 6 5-2 5-6 5 5-6 0-6v3z" fill="#d2a23b" stroke="#875f12"/></g>
<g id="mould"><path d="M2 11l6-4 3 3 6-7 6 4v9l-9 7-12-4z" fill="#2c8a92" stroke="#122"/><path d="M6 16l6 5 10-8v4l-9 6-9-3z" fill="#e8a82c"/><path d="M12 12l9-6v7l-9 6z" fill="#8db53a"/></g>
<g id="geart"><path d="M12 2h11v5h-3v15h-5V7h-3z" fill="#fff" stroke="#111" stroke-width="1.500"/><circle cx="7" cy="9" r="5" fill="#fff" stroke="#111" stroke-width="2" stroke-dasharray="2 1"/><circle cx="7" cy="9" r="2" fill="none" stroke="#111"/></g>
<g id="goldcyl"><path d="M7 2h14v20H7z" fill="url(#gold)" stroke="#222"/><path d="M6 1v9M2 5h8M3 2l6 7M9 2L3 9" stroke="#c22"/></g>
<g id="paint" fill="#c9c9c9" stroke="#999"><path d="M4 19l9-12 6 4-10 12z"/><path d="M6 5q13-5 15 11l2-4M21 16l-5-3" fill="none" stroke-width="2"/></g>
<g id="gdisc" fill="#a9a9a9" stroke="#999"><circle cx="9" cy="14" r="6"/><path d="M9 4v18M3 14h13" fill="none"/><path d="M13 9l5-7 4 3-6 8z" fill="#e5e5e5"/></g>

<g id="n-act"><path d="M2 2h13v13H2z" fill="#149324" stroke="#063"/><path d="M5 5l6 3-6 4" stroke="#fff" stroke-width="1.500" fill="none"/></g>
<g id="n-tool"><path d="M1 8h4v7H2zM6 5h4v8H7zM11 2h5l-1 9h-3z" fill="#d3ac3a" stroke="#7a6420"/><path d="M0 6h5v3H0zM5 3h5v3H5zM10 0h6v3h-6z" fill="#999"/></g>
<g id="n-loop"><path d="M3 13Q-1 8 3 4q5-4 6 0 6-3 6 3 0 7-6 7-3-2-6-1z" fill="none" stroke="#2c83a8" stroke-width="2"/></g>
<g id="n-ref"><path d="M2 3l4-1 3 4 4-5 3 2-4 5 3 5-3 2-4-4-4 4-3-2 4-5z" fill="#b7dce8" stroke="#47788e"/></g>
<g id="n-hole"><path d="M3 5v6q5 8 10 0V5z" fill="#eee" stroke="#333"/><ellipse cx="8" cy="4" rx="5" ry="2.500" fill="#b0e0ea" stroke="#333"/></g>
<g id="n-feat" fill="#e3bf5d" stroke="#6b511a"><circle cx="11" cy="5" r="4.500"/><path d="M1 7h8v8H1z"/></g>
<g id="n-ucs" fill="none" stroke="#5a98ac" stroke-width="2"><path d="M3 5v8l4-9v9l5-8M6 14l9-8M2 14h10l3-2"/></g>
<g id="n-lay" stroke="#2a4a38"><path d="M1 12l6-5 8 2-6 6z" fill="#f0e464"/><path d="M1 9l6-5 8 2-6 6z" fill="#bfe6a0"/><path d="M1 6l6-5 8 2-6 6z" fill="#aee0ef"/></g>
<g id="n-model"><path d="M1 4l3-2 4 2 3-2 5 2v8l-4 3-11-1z" fill="#1f7f96" stroke="#0a3d4b"/><path d="M4 7h5v4H4zM11 7l3-1v4l-3 1z" fill="none" stroke="#0a3d4b"/></g>
<g id="n-stock"><path d="M0 12l2-4 2-3 2-4h4l2 4 2 3 2 4-4 4H4z" fill="#b812b8" stroke="#560756"/><path d="M2 9q6 4 12 0M4 5q4 3 8 0M1 12q7 4 14 0" stroke="#560756" fill="none"/></g>
<g id="n-grp" fill="#a6e2e6" stroke="#4fa3b0"><path d="M5 4l6-2 4 2-1 7-6 2z"/><path d="M1 6l6-2 4 3-2 7-6 1z"/></g>
<g id="n-mac"><path d="M1 3h15v10H1z" fill="#2f8aa8" stroke="#0c3c4c"/><path d="M3 6h11v4H3z" fill="#dff3f8"/><path d="M4 8h3M9 8h3" stroke="#111" stroke-width="2"/></g>
<g id="chev"><path d="M1 3l4 4 4-4" fill="none" stroke="#333"/></g>
</defs>
</svg>

<nav class="menu">
<a href="#">文件(F)</a><a href="#">查看(V)</a><a href="#">插入(I)</a><a href="#">显示(D)</a><a href="#">工具(T)</a><a href="#">帮助(H)</a>
</nav>

<header>
<div class="row row-main">
<div class="bar">
<button title="打开"><svg><use href="#open"/></svg></button><button title="保存"><svg><use href="#save"/></svg></button><hr>
<button title="打印"><svg><use href="#print"/></svg></button><hr>
<button title="毛坯"><svg><use href="#block"/></svg></button><button title="安全区域"><svg><use href="#rapid"/></svg></button><button title="进给"><svg><use href="#feeds"/></svg></button><button title="起点"><svg><use href="#ball"/></svg></button><button title="切入"><svg><use href="#leads"/></svg></button><button title="刀轴"><svg><use href="#axes"/></svg></button><button title="点分布"><svg><use href="#dots"/></svg></button><button title="刀具计算"><svg><use href="#toolcalc"/></svg></button><hr>
<button title="碰撞"><svg><use href="#sim"/></svg></button><hr>
<button title="刀具路径"><svg><use href="#path"/></svg></button>
<label class="combo strategy"><svg class="pic"><use href="#pathrows"/></svg><select aria-label="策略"><option>平行精加工</option></select><svg class="chev"><use href="#chev"/></svg></label><hr>
<button title="创建"><svg><use href="#toolstar"/></svg></button><button title="检查"><svg><use href="#toolcheck"/></svg></button><button title="计算器"><svg><use href="#calc"/></svg></button><button title="测量"><svg><use href="#ruler"/></svg></button><hr>
<button title="全屏"><svg><use href="#expand"/></svg></button><hr>
<button title="镜像"><svg><use href="#mirror"/></svg></button><button class="close" title="关闭">×</button>
</div>
<div class="bar">
<label class="combo path-list"><select aria-label="刀具路径列表" disabled><option></option></select><svg class="chev"><use href="#chev"/></svg></label>
<button title="残留"><svg><use href="#pile"/></svg></button><hr>
<button title="变换"><svg><use href="#cycle"/></svg></button><button title="编辑"><svg><use href="#wave"/></svg></button><button title="删除段"><svg><use href="#wavex"/></svg></button><button title="旋转"><svg><use href="#rot"/></svg></button><button title="连接"><svg><use href="#arch"/></svg></button><button title="交换"><svg><use href="#swap"/></svg></button><button title="复制页"><svg><use href="#sheet"/></svg></button><button title="列表"><svg><use href="#list"/></svg></button><button title="复制"><svg><use href="#copy"/></svg></button><button title="统计"><svg><use href="#clock"/></svg></button><button title="删除"><svg><use href="#xx"/></svg></button><hr>
<button class="on" title="切削"><svg><use href="#hl-lines"/></svg></button><button class="on" title="连接段"><svg><use href="#hl-arm"/></svg></button><button class="on" title="切入段"><svg><use href="#hl-arcs"/></svg></button><button title="节点"><svg><use href="#nodes"/></svg></button><button title="曲线"><svg><use href="#curve"/></svg></button><button title="轴"><svg><use href="#axpen"/></svg></button><button title="扇形"><svg><use href="#fan"/></svg></button><button title="斜线"><svg><use href="#slash"/></svg></button><button title="梯形"><svg><use href="#trap"/></svg></button><button title="底座"><svg><use href="#trap2"/></svg></button><hr>
<button title="查找"><svg><use href="#find"/></svg></button><button title="圆"><svg><use href="#circ"/></svg></button><button title="槽"><svg><use href="#uu"/></svg></button><button title="填充"><svg><use href="#hatch"/></svg></button><button class="close" title="关闭">×</button>
</div>
</div>

<div class="row framed">
<div class="bar">
<button title="删除文件夹"><svg><use href="#folderx"/></svg></button><i class="gap wide"></i>
<button title="工具"><svg><use href="#wrench"/></svg></button><button title="标记"><svg><use href="#pinred"/></svg></button><button title="选刀"><svg><use href="#drillc"/></svg></button><button title="换刀"><svg><use href="#drillc"/></svg></button><button title="更新刀具"><svg><use href="#drillw"/></svg></button><hr>
<button title="分层"><svg><use href="#stack"/><text class="k" x="10" y="22" fill="#c0185a">20</text></svg></button><button class="flat"><svg><text class="k" x="1" y="10" fill="#e0105c">调取</text><text class="k" x="1" y="22" fill="#e0105c">分割</text></svg></button><hr>
<button title="边界"><svg><use href="#cloudy"/></svg></button><button title="选边界"><svg><use href="#cloudb"/></svg></button><button title="参考线"><svg><use href="#star4"/><use href="#arrow"/></svg></button><button title="放大"><svg><use href="#mag"/><path d="M10 6v8M6 10h8" stroke="#2d86c8" stroke-width="2"/></svg></button><button title="缩小"><svg><use href="#mag"/><path d="M6 10h8" stroke="#2d86c8" stroke-width="2"/></svg></button><button title="流线"><svg><use href="#flow"/></svg></button><button title="笔"><svg><use href="#pen"/></svg></button><hr>
<button title="模型边界"><svg><use href="#dblock"/><path d="M8 20q-4-8 4-9 8-1 7 6" fill="#fff" stroke="#3a9bd0" stroke-width="2"/><use href="#redplus"/></svg></button><button title="模型参考"><svg><use href="#dblock"/><path d="M7 9q6 4 12 0-4 6 0 12-6-4-12 0 4-6 0-12z" fill="#e4f4fa" stroke="#3a9bd0" stroke-width="1.500"/><use href="#redplus"/></svg></button><hr>
<button title="菱形"><svg><use href="#rhomb"/></svg></button><button title="实体"><svg><use href="#darkblob"/></svg></button><hr>
<button title="圆台"><svg><use href="#disc"/><use href="#arrow"/></svg></button><button title="圆环"><svg><use href="#ring"/></svg></button><button title="圆柱"><svg><use href="#cyl"/><use href="#arrow"/></svg></button><button title="钻孔"><svg><use href="#discdrill"/></svg></button><hr>
<button title="切削槽"><svg><use href="#ucut"/></svg></button><button><svg><use href="#ppath"/><text class="m" x="3" y="22" fill="#555">移会</text></svg></button><button><svg><use href="#ppath"/><text class="m" x="3" y="22" fill="#c47a26">忽略</text></svg></button><button><svg><use href="#ppath"/><text class="m" x="3" y="22" fill="#e02828">碰撞</text></svg></button><button><svg><use href="#ppath"/><text class="m" x="3" y="22" fill="#8a32d8">加工</text></svg></button><button><svg><use href="#ppath"/><text class="m" x="3" y="22" fill="#4c9ad4">抬面</text></svg></button><hr>
<button><svg><path d="M0 0h23v23H0z" fill="#5aa9ae" stroke="#222" stroke-width="2"/><text class="s" x="1" y="10" fill="#7d0d3e">批量</text><text class="s" x="1" y="22" fill="#7d0d3e">命名</text></svg></button><hr>
<button title="夹具"><svg><use href="#fixture"/></svg></button><i class="gap"></i>
<button title="打包"><svg><use href="#env"/></svg></button><i class="gap"></i>
<button title="添加"><svg><use href="#plus3d"/></svg></button><hr>
<button title="三菱"><svg><use href="#mitsu"/></svg></button><button title="发那科"><svg><use href="#wing"/></svg></button><i class="gap"></i>
<button title="华中"><svg><use href="#hnc"/></svg></button><button title="系统"><svg><use href="#redlogo"/></svg></button><hr>
<button title="文件夹"><svg><use href="#pfolder"/></svg></button><hr>
<button><svg><use href="#card"/><text class="m" x="4" y="11" fill="#c22">UG</text></svg></button><button><svg><use href="#card"/><text class="m" x="4" y="11" fill="#1d7fc4">NC</text></svg></button><button><svg><use href="#hand"/><text class="m" x="3" y="12" fill="#1d6fb4">G</text></svg></button><button><svg><use href="#hand"/><text class="x" x="1" y="9" fill="#1d6fb4">666</text></svg></button><button class="close far" title="关闭">×</button>
</div>
<div class="bar second">
<button title="线段"><svg><use href="#seg"/></svg></button><button title="圆弧"><svg><use href="#uparc"/></svg></button><button title="直径"><svg><use href="#diam"/></svg></button><button class="close far" title="关闭">×</button>
</div>
</div>

<div class="row framed row-last">
<div class="bar">
<button title="刀轴旋转"><svg><use href="#drillring"/></svg></button><button title="坐标平面"><svg><use href="#slab"/><use href="#tri"/></svg></button><button title="毛坯坐标"><svg><use href="#bluebox"/><use href="#tri" x="1" y="8"/></svg></button><button title="坐标"><svg><use href="#obox"/><use href="#tri"/></svg></button><hr>
<button title="刀库"><svg><use href="#bars"/></svg></button><button title="存储"><svg><use href="#gsave"/></svg></button><button class="flat"><svg><text class="k" x="1" y="10" fill="#e0105c">先设</text><text class="k" x="1" y="22" fill="#e0105c">参数</text></svg></button><hr>
<button title="撤销"><svg><use href="#hole"/><use href="#undo"/></svg></button><button title="关灯"><svg><use href="#hole"/><use href="#bulb" fill="#8a8a8a"/></svg></button><button title="开灯"><svg><use href="#hole"/><use href="#bulb" fill="#f6e21a"/></svg></button><button title="显示"><svg><use href="#hole"/><use href="#eye"/></svg></button><button title="清除"><svg><use href="#hole"/><use href="#spark"/><use href="#redx"/></svg></button><hr>
<button class="flat"><svg><text class="k" x="1" y="10" fill="#1414d8">等高</text><text class="k" x="1" y="22" fill="#1414d8">分割</text></svg></button><button class="flat"><svg><text class="k" x="1" y="10" fill="#1414d8">溜刀</text><text class="k" x="1" y="22" fill="#1414d8">分割</text></svg></button><hr>
<button><svg><path d="M1 11l5-5h15l-5 5H1z" fill="#ddd" stroke="#999" stroke-dasharray="2 1"/><use href="#tri" y="-3"/><text class="k" x="11" y="22" fill="#1c7fae">试</text></svg></button><i class="gap"></i>
<button><svg><use href="#zig"/><text class="m" x="3" y="22" fill="#e01848">清根</text></svg></button><hr>
<button><svg><use href="#star4"/><text class="m" x="3" y="22" fill="#1414d8">当前</text></svg></button><button title="槽"><svg><use href="#slot"/></svg></button><button title="编辑参考线"><svg><use href="#spen"/></svg></button><button><svg><use href="#green"/><text class="k" x="11" y="22" fill="#d01830">斜</text></svg></button><hr>
<button title="中心"><svg><use href="#target"/></svg></button><button title="水平"><svg><use href="#target"/><path d="M1 12h22" stroke="#d22" stroke-width="2"/></svg></button><button title="垂直"><svg><use href="#target"/><path d="M12 1v22" stroke="#d22" stroke-width="2"/></svg></button><hr>
<button title="孔加工"><svg><use href="#vdrill"/></svg></button><button title="孔"><svg><use href="#bcyl"/><path d="M12 14h11M14 17h9M12 20h9" stroke="#888" stroke-width="2"/></svg></button><button title="选孔"><svg><use href="#bcyl"/><use href="#arrow"/></svg></button><button class="close mid" title="关闭">×</button>
</div>
<div class="bar snug">
<button title="选区域"><svg><use href="#blob2"/></svg></button><button title="选面"><svg><use href="#gslab"/><use href="#arrow"/></svg></button><button title="顶面"><svg><use href="#wire" stroke="#999"/><use href="#ftop" fill="#62a8d8"/><use href="#arrow"/></svg></button><button title="底面"><svg><use href="#wire" stroke="#999"/><use href="#fbot" fill="#4896cc"/><use href="#arrow"/></svg></button><button title="层"><svg><use href="#layer"/><use href="#arrow"/></svg></button><hr>
<button title="方块"><svg><use href="#ffull" fill="#e9b878"/><use href="#wire" stroke="#8c5c20"/></svg></button><i class="gap"></i>
<button title="方块一"><svg><use href="#ffull" fill="#bd8af0"/><use href="#wire" stroke="#6a2a9c"/></svg></button><button title="方块二"><svg><use href="#ftop" fill="#9a5fd0"/><use href="#wire" stroke="#444"/></svg></button><button title="方块三"><svg><use href="#ffull" fill="#a865ec"/><use href="#ftop" fill="#7a12e0"/><use href="#wire" stroke="#5a1a9c"/></svg></button><i class="gap"></i>
<button title="方块四"><svg><use href="#ffull" fill="#bd8af0"/><use href="#fbot" fill="#7a12e0"/><use href="#wire" stroke="#6a2a9c"/></svg></button><button title="方块五"><svg><use href="#fbot" fill="#7a12e0"/><use href="#wire" stroke="#6a3a9c"/></svg></button><button title="方块六"><svg><use href="#fbot" fill="#7a12e0"/><use href="#wire" stroke="#6a3a9c"/></svg></button><button title="方块七"><svg><use href="#fbot" fill="#7a12e0"/><use href="#wire" stroke="#6a3a9c"/></svg></button><i class="gap"></i>
<button title="方块八"><svg><use href="#fbot" fill="#2878e0"/><use href="#wire" stroke="#5a5a9c"/></svg></button><button title="方块九"><svg><use href="#fbot" fill="#2878e0"/><use href="#wire" stroke="#5a5a9c"/></svg></button><i class="gap"></i>
<button title="选顶"><svg><use href="#ffull" fill="#bd8af0"/><use href="#ftop" fill="#7a12e0"/><use href="#wire" stroke="#6a2a9c"/><use href="#arrow"/></svg></button><button title="选底"><svg><use href="#ffull" fill="#bd8af0"/><use href="#fbot" fill="#7a12e0"/><use href="#wire" stroke="#6a2a9c"/><use href="#arrow"/></svg></button><button title="选蓝底"><svg><use href="#fbot" fill="#2878e0"/><use href="#wire" stroke="#5a5a9c"/><use href="#arrow"/></svg></button><hr>
<button title="框选"><svg><use href="#dashsel"/></svg></button><button title="圈选"><svg><use href="#circsel"/></svg></button><button title="角选"><svg><use href="#corners"/><use href="#arrow"/></svg></button><i class="gap"></i>
<button title="顶面框"><svg><use href="#ftop" fill="#4f9fd8"/><use href="#wire" stroke="#444"/><use href="#arrow"/></svg></button><button title="倒角"><svg><use href="#blend"/></svg></button><button title="圆角"><svg><use href="#gear"/></svg></button><button title="层面"><svg><use href="#layers2"/></svg></button><button title="选云"><svg><use href="#clouds"/></svg></button><hr>
<button class="flat"><svg><text class="k" x="1" y="10" fill="#1c1c6c">选平</text><text class="k" x="1" y="22" fill="#1c1c6c">坦面</text></svg></button><button class="close mid" title="关闭">×</button>
</div>
</div>
</header>

<main>
<aside class="dock">
<div class="grip"><span></span><button title="浮动"><svg><path d="M4 2h7v5M2 5h7v5H2zM2 6h7" fill="none" stroke="#777" stroke-width="1.500"/></svg></button><button title="关闭">×</button></div>
<div class="panel">
<div class="tabs">
<button class="active" title="浏览器"><svg><path d="M4 2v19h6M4 6h6M10 6v10h6M10 11h11" fill="none" stroke="#14147c" stroke-width="1.500"/><path d="M2 1h4v3H2zM8 5h4v3H8zM14 9h4v3h-4zM19 10h3v3h-3zM14 14h4v3h-4zM8 20h4v3H8z" fill="#14147c"/></svg></button><button title="网络"><svg><circle cx="11" cy="12" r="11" fill="#1b6fb8"/><path d="M4 4q6-4 9 0l-3 5 2 4-4 5-5-5-2-5zM14 5q7 1 7 8l-5 6-4-8z" fill="#3eae3c"/></svg></button><button title="回收站"><svg><path d="M3 4h18l-3 18H6z" fill="#ececec" stroke="#ccc"/><ellipse cx="12" cy="4" rx="9" ry="2" fill="#f5f5f5" stroke="#ccc"/></svg></button>
</div>
<ul class="tree">
<li><svg><use href="#n-act"/></svg>激活</li>
<li><svg viewBox="0 0 24 24"><use href="#machine"/></svg>机床</li>
<li><svg viewBox="0 0 24 24"><use href="#pages"/></svg>NC程序</li>
<li><svg viewBox="0 0 24 24"><use href="#path"/></svg>刀具路径</li>
<li><button title="展开">+</button><svg><use href="#n-tool"/></svg>刀具</li>
<li><svg><use href="#n-loop"/></svg>边界</li>
<li><svg><use href="#n-ref"/></svg>参考线</li>
<li><svg><use href="#n-hole"/></svg>孔特征设置</li>
<li><svg><use href="#n-feat"/></svg>特征组</li>
<li><button title="展开">+</button><svg><use href="#n-ucs"/></svg>用户坐标系</li>
<li><button title="展开">+</button><svg><use href="#n-lay"/></svg>层和组合</li>
<li><button title="展开">+</button><svg><use href="#n-model"/></svg>模型</li>
<li><svg><use href="#n-stock"/></svg>残留模型</li>
<li><svg><use href="#n-grp"/></svg>组</li>
<li><button title="展开">+</button><svg><use href="#n-mac"/></svg>宏</li>
</ul>
</div>
</aside>

<div class="side">
<div class="vbar framed">
<button><svg><path d="M0 0h23v23H0z" fill="#4fc4f0" stroke="#347"/><text class="s" x="1" y="10" fill="#4a2ad0">检测</text><text class="s" x="1" y="22" fill="#4a2ad0">破面</text></svg></button><button><svg><path d="M0 0h23v23H0z" fill="#4fc4f0" stroke="#347"/><text class="s" x="1" y="10" fill="#4a2ad0">定向</text><text class="s" x="1" y="22" fill="#4a2ad0">反面</text></svg></button><hr>
<button title="上移"><svg><use href="#up"/></svg></button><button title="下移"><svg><use href="#down"/></svg></button><hr>
<button><svg><path d="M0 0h23v23H0z" fill="#5ab5b5" stroke="#222"/><text class="s" x="1" y="10" fill="#7d0d3e">边界</text><text class="s" x="1" y="22" fill="#7d0d3e">命名</text></svg></button><button title="照明"><svg><use href="#torch"/></svg></button><hr>
<button title="程序手动"><svg><use href="#pagehand"/></svg></button><button title="选程序"><svg><use href="#pages"/><use href="#arrow"/></svg></button><button><svg><use href="#ncspiral"/><text class="x" x="2" y="8" fill="#246">NC</text></svg></button><hr>
<button title="新建"><svg><use href="#spark4"/></svg></button><button title="关联"><svg><use href="#linkp"/></svg></button><hr>
<button title="路径刀具"><svg><use href="#snake"/></svg></button><button><svg><use href="#trim"/><text class="k" x="11" y="22" fill="#e01830">裁</text></svg></button><button title="删框"><svg><use href="#boxx"/></svg></button><button title="开框"><svg><use href="#boxo"/></svg></button><hr>
<button title="减"><svg><use href="#hole"/><use href="#minus"/></svg></button><hr>
<button title="删除孔"><svg><use href="#hole"/><use href="#redx"/></svg></button><hr>
<button title="禁用孔"><svg><use href="#hole"/><use href="#stop"/></svg></button><button title="确认孔"><svg><use href="#hole"/><use href="#tick"/></svg></button><hr>
<button title="选曲面"><svg><use href="#gslab"/><use href="#arrow"/></svg></button><hr>
<button title="选区"><svg><use href="#blob2"/></svg></button><hr>
<button title="选平面"><svg><use href="#table"/><use href="#arrow"/></svg></button><hr>
<button title="夹持红"><svg><use href="#clamp" fill="#c41c2c"/></svg></button><button title="夹持紫"><svg><use href="#clamp" fill="#b41cc4"/></svg></button><hr>
<button title="顶"><svg><use href="#t1"/></svg></button><button title="底"><svg><use href="#t2"/></svg></button><button title="侧"><svg><use href="#t3"/></svg></button><button title="折"><svg><use href="#t4"/></svg></button><button class="close" title="关闭">×</button>
</div>
<div class="vbar framed">
<button><svg><path d="M0 0h23v23H0z" fill="#fff" stroke="#222"/><text class="s" x="1" y="10" fill="#111a5c">开粗</text><text class="s" x="1" y="22" fill="#111a5c">参考</text></svg></button><button><svg><path d="M0 0h23v23H0z" fill="#fff" stroke="#222"/><text class="s" x="1" y="10" fill="#18a8e8">模型</text><text class="s" x="1" y="22" fill="#111a5c">参考</text></svg></button><button><svg><path d="M0 0h23v23H0z" fill="#fff" stroke="#222"/><text class="s" x="1" y="10" fill="#111a5c">关闭</text><text class="s" x="1" y="22" fill="#111a5c">参考</text></svg></button><button title="切削夹具"><svg><use href="#cutfix"/></svg></button><button title="加"><svg><use href="#bplus"/></svg></button><button title="清单"><svg><use href="#list2"/></svg></button><hr>
<button title="确定"><svg><use href="#check"/></svg></button><button title="计算"><svg><use href="#calc2"/></svg></button><button><svg><use href="#calc2"/><path d="M0 13h23v10H0z" fill="#fff"/><text class="m" x="2" y="22" fill="#c98af0">队列</text></svg></button><hr>
<button><svg><path d="M0 0h6L0 5zM23 0h-6l6 5z" fill="#b01850"/><use href="#yplus"/><text class="m" x="3" y="22" fill="#e01838">任意</text></svg></button><button><svg><path d="M0 5l6-4M23 0h-6l6 5z" fill="#b01850" stroke="#b01850"/><path d="M0 15h4v8H0z" fill="#3c9"/><use href="#yplus"/><text class="m" x="3" y="22" fill="#e01838">顺铣</text></svg></button><hr>
<button title="加工区"><svg><use href="#skysq"/><use href="#yblob"/></svg></button><button title="半区"><svg><use href="#skysq"/><use href="#yblob" x="-2" y="-3"/></svg></button><button title="封闭"><svg><path d="M2 1v22M22 1v22M1 6h22M1 17h22" stroke="#289850"/><use href="#peanut"/></svg></button><button title="删除区"><svg><use href="#yplus" x="-2"/><path d="M2 22q3-9 12-4t9-8" fill="none" stroke="#e8b040"/><use href="#redx"/></svg></button><button><svg><use href="#hs"/><text class="m" x="3" y="22" fill="#2a6cb8">高速</text></svg></button><button title="刀具蓝"><svg><use href="#hs"/><circle cx="18" cy="18" r="5" fill="#3858c0"/></svg></button><button title="刀具确认"><svg><use href="#hs"/><use href="#ok"/></svg></button><hr><hr>
<button><svg><use href="#bluetool"/><text class="m" x="3" y="22" fill="#e81830">重设</text></svg></button><button><svg><use href="#coil"/><text class="m" x="3" y="22" fill="#e81830">重设</text></svg></button><button><svg><path d="M4 2v20M4 12h18M4 12l10-9" stroke="#a66" stroke-dasharray="2 2"/><text class="m" x="3" y="22" fill="#e01868">重设</text></svg></button><button><svg><use href="#bluebox"/><text class="m" x="3" y="22" fill="#e01868">重设</text></svg></button><button><svg><path d="M2 0h10v9H2zM5 9h4v12H5z" fill="#aaa"/><text class="m" x="3" y="22" fill="#e01868">重设</text></svg></button><button><svg><use href="#lcloud"/><text class="m" x="3" y="22" fill="#e01868">重设</text></svg></button><hr>
<button><svg><path d="M0 0h23v23H0z"/><text class="k" x="1" y="10" fill="#fff">使之</text><text class="k" x="1" y="22" fill="#fff">无效</text></svg></button><hr>
<button title="目录"><svg><use href="#bfolder"/></svg></button><hr>
<button><svg><use href="#lcloud"/><text class="m" x="3" y="22" fill="#e01838">求和</text></svg></button><button title="裁剪蓝"><svg><use href="#lcloud"/><path d="M7 14v8M12 14v8M17 14v8M5 22h4M10 22h4M15 22h4" stroke="#1838a0" stroke-width="2"/></svg></button><button title="裁剪红"><svg><use href="#lcloud"/><path d="M7 14v8M12 14v8M17 14v8M5 22h4M10 22h4M15 22h4" stroke="#b01858" stroke-width="2"/></svg></button><hr>
<button title="缠绕"><svg><use href="#wrap"/></svg></button><button class="close" title="关闭">×</button>
</div>
</div>

<section class="view">
<svg class="scene" viewBox="452 111 1130 869" preserveAspectRatio="xMidYMid meet">
<g class="w">
<path d="M770 330L1082 334L1338 369L1334 404L1024 400L768 367zM770 330L1026 364L1338 369M768 367L1080 371L1334 404M1082 334L1080 371M1026 364L1024 400M789 370L1060 373L1313 403M789 370L1030 396L1313 403"/>
<path d="M789 370L780 505L860 511M857 335L853 375L848 446M857 335H866M829 373L824 443M819 443L855 447M822 446L817 505M824 371L858 374M826 373H856M780 505L845 509M798 498V504H813V498H796M805 498V494H808M825 511V529M855 511V529M828 511V531M820 507L860 511"/>
<path d="M825 529L896 533M825 530L893 539M827 531L826 551L845 554H896M844 531L843 553M839 554L838 563L893 570L1000 585L1165 589M825 525L960 529M879 534V570M884 534V570M880 571L1060 590H1198L1199 552M893 534V558"/>
<path d="M1313 403L1304 537M1243 362L1241 404M1243 362H1251M1250 399L1245 470M1238 470L1277 472M1271 472L1267 531M1239 404L1275 399M1246 397H1280M1223 532L1305 537M1270 527H1290M1277 527V523H1282V527M1287 528V536M1229 533L1226 548M1258 536L1256 550M1223 531L1280 536"/>
<path d="M1166 539L1256 550M1166 542L1256 553H1065M1065 556L1252 558L1251 570H1165M1235 552V570M1239 571V578L1160 571M1120 556L1239 578M1197 553V589H1060M1182 545V589M1178 545V588M1065 549H1255M1100 553V567L1200 570M1143 550V580M1170 545V567M1065 567H1160M1065 580L1198 589"/>
<path d="M893 428L985 437L1002 460M894 428L871 532M904 430L893 530M921 432L911 530M926 433L919 510M935 376L932 430M932 378L955 380M943 434V500M951 434V498M960 434V497M966 436V495M972 437V494M948 440Q965 475 1010 498M950 436Q975 480 1020 500M956 437L1018 499M965 469L1014 498M968 474L1024 499M975 474L1028 501M938 440L975 495M930 483H948M1038 361L1030 500M1047 350L1044 386M1047 350H1060M1063 338L1057 420M1063 338H1072M1058 380H1077M1037 361H1046M1029 390H1045M1026 400V480M1017 397L1010 490M1003 398L1000 430M988 394H1020M1020 495H1036M1080 372L1078 430M1086 374L1080 500M1099 374L1094 430M1083 373H1115M1092 343H1080"/>
<path d="M1202 440L1208 543M1192 440L1189 540M1175 438L1170 540M1165 438L1162 540M1146 387H1163M1150 392H1167M1112 435V505M1118 434V505M1126 434V506M1133 434V506M1140 434V508M1158 438L1154 515M1150 437L1085 500M1152 440L1095 502M1154 445L1100 502M1144 440L1078 500M1130 434L1076 499M1108 438V508"/>
<path class="b" d="M893 428L985 437L1032 504M984 438L983 493M979 437V494M938 385L936 510M1060 498L1112 432L1155 435L1203 440L1211 545M1153 437V514M1147 434L1148 512M1162 388V432M938 432L978 436M1115 433L1150 436"/>
<path d="M880 415L947 423M1002 416L1090 424M1070 426L1112 431M947 423L1040 436M1040 440L1100 449M1160 443L1216 445M913 460L1120 466M990 465L1170 485M960 463L1170 481M1075 447H1108M1050 483H1075M1000 470L1140 486M1070 466L1180 489M985 470H1070M985 480L1070 486"/>
<ellipse cx="880" cy="421" rx="5" ry="6"/><ellipse cx="1002" cy="422" rx="4" ry="6"/><ellipse cx="1025" cy="440" rx="4" ry="6"/><ellipse cx="1037" cy="442" rx="5" ry="6"/><ellipse cx="1059" cy="430" rx="4" ry="6"/><ellipse cx="1071" cy="431" rx="4" ry="6"/><ellipse cx="947" cy="429" rx="5" ry="6"/><ellipse cx="1092" cy="449" rx="4" ry="6"/><ellipse cx="1216" cy="451" rx="5" ry="6"/><ellipse cx="913" cy="465" rx="4" ry="6"/><ellipse cx="1176" cy="494" rx="5" ry="6"/>
</g>
<g class="w dot">
<path d="M864 336L861 378M828 374L823 443M849 447L845 507M1250 363L1248 400M1274 398L1270 471M1243 472L1239 530M954 380L948 425M992 398L988 440M1070 340L1066 420M1060 352L1055 410M1045 363L1038 440M1075 382L1070 440M1110 377L1107 430M1149 392L1147 435M885 425L945 432M1006 428L1090 436M1160 449L1212 456M918 470L1100 480M1035 448L1110 455M1000 412L1110 425M950 432L1110 460M1000 478L1170 495M1026 365L1024 480M1010 400V480M1066 430V500M1050 440V500"/>
</g>
<path fill="url(#mesh)" d="M917 510L935 502 958 497 1000 495 1033 503 1065 499 1100 501 1130 508 1167 522V548L1125 557H1062V531H917z"/>
<path fill="url(#dense)" d="M918 510L935 501 965 495 1005 498 1036 503 1066 498 1095 500 1125 508 1095 512 1068 516 1064 531H1020L1005 520 960 512 925 516z"/>
<path fill="url(#mesh)" d="M925 572H1062L1110 576 1125 582 1105 588 1040 587 990 582z"/>
<path class="w" d="M1040 503L1062 531M1065 515L1167 522M1065 535L1167 540M1100 505V556M1135 510V556M1150 515V552M1060 545H1167M1090 503V590M1115 510V580M1075 510V590M1127 556V588M917 510L915 532M930 504V531M945 500V531M1095 500L1130 508L1167 522V550M1062 557H1130L1167 550"/>
<path d="M896 531L1063 533 1061 573 894 570z" fill="#b4babd" stroke="#f1f14b"/>
<g class="w">
<path d="M772 603L1082 607L1117 611L807 607zL763 737M807 607L802 740M839 606L830 738M1117 611L1110 743M1082 607L1074 735M953 628L1264 632L1297 636L987 632zL942 760M1297 636L1288 768M1264 632L1254 767M1224 633L1216 737M987 632L979 767"/>
<path d="M805 693L1116 697L1254 715L932 711zL799 740M1254 715L1251 763M803 717L1113 722L1252 739L955 736zM797 740L943 760L1240 764M801 741L1110 744L1250 765M942 712V760M797 738L945 757H1245"/>
<path d="M743 733L1074 738L1308 771L999 767zL739 770L1050 773L1307 807L996 804L739 770M1308 771L1307 807M999 767L996 804M1052 738L1050 773"/>
<path d="M927 572L919 698M940 572L932 722M979 572L973 700M986 572L980 730M991 572L983 724M1029 575L1021 720M1034 575L1024 730M1037 575L1028 725M1042 575L1036 723M1083 575L1074 723M1087 575L1078 724M1093 575L1084 732M1134 570L1127 710M1147 575L1139 710"/>
<path d="M916 698H927M915 723H926M930 722H941M970 700H980M970 724H980M974 731H984M1011 733H1022M1022 730H1032M1032 723H1046M1072 724H1084M1076 732H1087M1070 701H1080M1077 708H1087M1113 734H1125M1126 732H1138M1116 710H1126M1130 709H1140M1024 700H1038M1012 709H1022M1209 731H1219M1245 761H1253M797 735H805M840 714H846M1104 717H1113"/>
<path d="M804 735L803 775H796M835 740L834 775H826M846 714L844 744H838M985 757L984 800H976M1015 740L1014 801H1006M1041 740L1040 778H1032M1071 736L1070 778H1062M1221 765L1219 802H1212M1253 761L1251 802H1243M949 728L947 760M944 728V758M1110 718V747M1106 722V746M1216 731V765M978 757H986M1030 741H1042M1064 736H1073M1215 765H1224"/>
</g>
<g class="w dot"><path d="M934 572L928 723M947 572L941 712M983 572L976 724M1022 572L1011 733M1025 572L1015 730M1039 572L1030 720M1052 572L1044 733M1125 572L1117 733M1139 572L1131 732M845 606L836 743M1231 633L1222 763M798 743V775M828 743L827 775M978 765L977 800M1009 762L1008 800M1034 743V778M1065 743V778M1214 765L1213 802M1246 765L1244 802M1210 735V765M1090 572L1081 730"/></g>
<path class="y" d="M888 695L887 720M872 695H891M870 719H888M990 711V735M990 711H1005M988 735H1003M1067 697L1066 721M1051 697H1070M1051 721H1067M1170 713L1169 737M1168 713H1186M1168 737H1184"/>
<path class="y dot" d="M874 695L872 719M1004 712V735M1053 697L1052 721M1183 713L1182 737"/>

<g class="cube"><path d="M1492 147L1523 145 1553 151 1551 196 1519 197 1489 191z" fill="#64737e"/><path d="M1523 145L1553 151 1551 196 1519 197z" fill="#73818b"/><path d="M1517 153h10l-1 34h-10z" fill="#5d6c7b"/><path d="M1489 191l30 6 32-1" stroke="#293d4b" fill="none"/><text x="1495" y="178">左</text><text x="1528" y="178">前</text></g>
<g class="axis"><path d="M482 950L484 928" stroke="#2a9c9c"/><path d="M481 929l3-9 2 9z" fill="none" stroke="#2a9c9c"/><path d="M482 950L468 951L460 951M482 950L500 953M468 948v6l-8-3zM493 950l7 3-7 2z" stroke="#c8c8c8" fill="none"/><text x="486" y="918" fill="#2a9c9c">Z</text><text x="461" y="948" fill="#d8d8d8">Y</text><text x="503" y="951" fill="#d8d8d8">X</text></g>
<path d="M504 227v16l4-4 3 7 3-1-3-7h5z" fill="#fff" stroke="#222" stroke-width=".5"/>
</svg>
</section>

<div class="tools">
<div class="rbar">
<button title="机床"><svg><use href="#machine"/></svg></button><button title="顶视"><svg><use href="#ftop" fill="#5cc0dc"/><use href="#wire" stroke="#777"/><use href="#corner"/></svg></button><button title="右视"><svg><path d="M16 8l5-6v14l-5 6z" fill="#5cc0dc"/><use href="#wire" stroke="#777"/><use href="#corner"/></svg></button><button title="前视"><svg><use href="#wire" stroke="#777"/><path d="M2 8h14v14H2z" fill="#7ccbe2" stroke="#346"/><use href="#corner"/></svg></button><button title="轴测"><svg><use href="#iso"/><use href="#corner"/></svg></button><button title="上一视图"><svg><use href="#mag"/><path d="M7 8l3-3v2q6 0 5 4-2 4-6 3 5-3 0-4v2z" fill="#a99a3c"/></svg></button><button title="刷新"><svg><use href="#refresh"/></svg></button><button title="全部缩放"><svg><use href="#magp"/><path d="M7 6l8 8M15 6l-8 8M6 8V5h3M13 5h3v3M6 12v3h3M13 15h3v-3" stroke="#000" stroke-width="2" fill="none"/><use href="#corner"/></svg></button><button title="框缩放"><svg><use href="#magp"/><path d="M7 6h8v8H7z" fill="#fff" stroke="#000" stroke-width="2"/></svg></button><hr>
<button class="on" title="毛坯"><svg><use href="#obox3"/></svg></button><hr>
<button class="on" title="着色"><svg><use href="#rgb"/><use href="#corner"/></svg></button><button class="on" title="线框"><svg><use href="#globe"/></svg></button><hr class="tall">
<button title="框选"><svg><use href="#selc"/><use href="#corner"/></svg></button><i class="gap"></i><button title="撤销选择"><svg><use href="#selu"/></svg></button><button class="close" title="关闭">×</button>
</div>
<div class="rbar framed lower">
<button title="模具"><svg><use href="#mould"/></svg></button><button title="颜色"><svg><use href="#rgb"/></svg></button><button title="设置"><svg><use href="#geart"/></svg></button><button class="close" title="关闭">×</button>
</div>
</div>
</main>

<footer>
<div class="bar">
<label class="combo pick"><svg class="pic"><use href="#goldcyl"/></svg><select aria-label="刀具类型"><option></option></select><svg class="chev"><use href="#chev"/></svg></label>
<button title="刀具一"><svg><use href="#torch"/></svg></button><button title="刀具二"><svg><use href="#brush"/></svg></button><button title="刀具三"><svg><use href="#spanner"/></svg></button>
<label class="combo tool-list"><select aria-label="刀具" disabled><option></option></select><svg class="chev"><use href="#chev"/></svg></label>
<button title="残留"><svg><use href="#pile"/></svg></button><hr class="wide"><button title="画"><svg><use href="#paint"/></svg></button><i class="gap blank"></i><hr>
<button title="轴笔"><svg><use href="#axpen"/></svg></button><button title="盘一"><svg><use href="#gdisc"/></svg></button><button title="盘二"><svg><use href="#gdisc"/></svg></button><hr>
<button title="编辑"><svg><use href="#pencil"/></svg></button><button title="删除"><svg><use href="#xx"/></svg></button><button class="close far" title="关闭">×</button>
</div>
</footer>
</body>
</html>
```

FILE: styles.css
```css
* { box-sizing: border-box; }

body {
  margin: 0;
  height: 100vh;
  display: flex;
  flex-direction: column;
  overflow: hidden;
  background: #ededed;
  border-right: 4px solid #05399c;
  font: 12px/16px "Noto Sans CJK SC", "Open Sans", sans-serif;
  color: #000;
}

.sprite { position: absolute; width: 0; height: 0; }

button {
  flex: none;
  width: 25px;
  height: 24px;
  padding: 0;
  border: 0;
  background: none;
  font: inherit;
  color: inherit;
}
button svg { display: block; width: 24px; height: 24px; overflow: visible; }

/* lettering on icons */
.k, .s, .m, .x { font-family: "Liberation Sans", "Noto Sans CJK SC", sans-serif; }
.k { font-size: 11px; font-weight: 700; }
.s { font-size: 11px; }
.m { font-size: 10px; font-weight: 700; }
.x { font-size: 8px; font-weight: 700; }

/* menu */
.menu {
  flex: none;
  display: flex;
  gap: 14px;
  height: 16px;
  padding-left: 6px;
  background: #fdfdfd;
  line-height: 12px;
}
.menu a { color: inherit; text-decoration: none; }

/* horizontal toolbars */
header { flex: none; border-bottom: 2px solid #8c9296; }
.row { display: flex; height: 31px; }
.row-main { border-top: 1px solid #999; }
.row-main .bar { border-bottom: 1px solid #999; }
.row-last .bar { border-top: 1px solid #999; }
.bar {
  display: flex;
  align-items: center;
  padding: 0 5px 0 1px;
  border-right: 1px solid #999;
}
.bar.second { padding-left: 17px; }
.bar.snug { padding-left: 2px; }
.row-main .bar + .bar { padding-left: 4px; }
hr {
  flex: none;
  width: 1px;
  height: 24px;
  margin: 0 5px 0 4px;
  border: 0;
  background: #a0a0a0;
}
.gap { flex: none; width: 10px; height: 5px; }
.gap.wide { width: 20px; }
.gap.blank { width: 50px; }

.framed button {
  background: #fff;
  border: solid #9c9c9c;
  border-width: 1px 0 0 1px;
}
.framed svg { width: 23px; height: 23px; }
.framed button.flat { background: none; border-color: transparent; }
.on { background: #bcdcf4; box-shadow: inset 0 0 0 1px #94c6ec; }

.close, .framed button.close {
  width: 13px;
  height: 14px;
  margin-left: 2px;
  border: 0;
  background: #fff;
  color: #666;
  font: 700 15px/13px "Liberation Sans", sans-serif;
}
.framed button.close.mid { margin: 0 0 0 8px; }
.bar button.close.far, .framed button.close.far { margin: 0 5px 0 9px; }

/* drop-downs */
.combo { position: relative; display: flex; align-items: center; height: 24px; background: #fff; }
.combo select {
  appearance: none;
  flex: 1;
  min-width: 0;
  height: 22px;
  padding: 0;
  border: 0;
  background: #ededed;
  font: inherit;
  color: #000;
  opacity: 1;
}
.combo .pic { flex: none; width: 24px; height: 24px; }
.combo .chev { position: absolute; right: 4px; top: 8px; width: 10px; height: 10px; }
.strategy { width: 190px; margin: 0 2px 0 5px; padding-right: 20px; }
.path-list { width: 121px; margin-right: 1px; }
.path-list select, .tool-list select { background: #dcdcdc; }
.tool-list { width: 122px; margin-right: 4px; }
.pick { width: 46px; margin: 0 6px 0 1px; }
.pick select { background: #fff; }

/* work area */
main { flex: 1; display: flex; min-height: 0; }
.dock { flex: none; width: 390px; padding: 2px 8px 3px 2px; display: flex; flex-direction: column; }
.grip { display: flex; align-items: center; height: 13px; margin-bottom: 1px; }
.grip span { flex: 1; height: 6px; margin: 1px 3px 0 1px; border: solid #a0a0a0; border-width: 1px 1px 1px 0; }
.grip button { width: 14px; height: 13px; color: #666; background: #fafafa; font: 700 15px/12px "Liberation Sans", sans-serif; }
.grip svg { width: 12px; height: 12px; }
.panel { flex: 1; border: solid #707070; border-width: 2px 0 0 1px; border-bottom: 1px solid #ccc; border-right: 1px solid #ccc; background: #fff; }
.tabs { display: flex; align-items: flex-end; height: 38px; padding-left: 2px; background: #ededed; border-bottom: 2px solid #999; }
.tabs button { width: 34px; height: 32px; padding: 3px 5px; border-right: 1px solid #ccc; border-top: 1px solid #ddd; }
.tabs button.active { width: 40px; height: 35px; padding-left: 8px; background: #fff; }
.tabs button.active + button { padding-left: 3px; }
.tree {
  position: relative;
  margin: 2px 0 0;
  padding: 0;
  list-style: none;
}
.tree::before { content: ""; position: absolute; left: 11px; top: 10px; bottom: 10px; border-left: 1px dotted #777; }
.tree li { position: relative; display: flex; align-items: center; height: 20px; padding-left: 22px; gap: 5px; }
.tree li::before { content: ""; position: absolute; left: 12px; top: 10px; width: 9px; border-top: 1px dotted #777; }
.tree svg { width: 16px; height: 16px; }
.tree button {
  position: absolute;
  left: 7px;
  top: 6px;
  width: 9px;
  height: 9px;
  border: 1px solid #888;
  background: #fff;
  font: 9px/7px "Liberation Sans", sans-serif;
  z-index: 1;
}

/* vertical toolbars */
.side { flex: none; display: flex; align-items: flex-start; width: 62px; border-left: 1px solid #999; }
.vbar { display: flex; flex-direction: column; padding: 2px 2px 1px 3px; border: solid #999; border-width: 0 1px 1px 0; }
.vbar + .vbar { padding: 2px 3px 1px; }
.vbar button { width: 24px; }
.vbar button.close { margin: 8px 0 8px 1px; }
.vbar hr { width: 24px; height: 9px; margin: 0; background: none; }
.view {
  flex: 1;
  min-width: 0;
  background: linear-gradient(#2d4759, #223646 22%, #182530 45%, #0e161c 65%, #05080a 83%, #000);
}
.scene { display: block; width: 100%; height: 100%; shape-rendering: crispEdges; }
.w { fill: none; stroke: #9fb0b8; }
.b { stroke-width: 2; }
.y { fill: none; stroke: #efef4a; }
.dot { stroke-dasharray: 2 3; }
.cube text { font: 20px "Noto Sans CJK SC", sans-serif; fill: #46545f; }
.axis text { font: 14px "Liberation Sans", sans-serif; }

.tools { flex: none; width: 30px; border-left: 2px solid #fff; }
.rbar { padding: 2px 2px 0; border-bottom: 1px solid #999; display: flex; flex-direction: column; }
.rbar button { width: 24px; }
.rbar hr { width: 24px; height: 1px; margin: 4px 0; background: #999; }
.rbar hr.tall { margin: 10px 0 6px; }
.rbar .gap { height: 5px; }
.rbar button.close { margin: 8px 0 2px; }
.rbar.lower { padding-top: 12px; }
.rbar.lower button.close { margin-left: 0; }

footer { flex: none; display: flex; height: 30px; border-top: 2px solid #a0a0a0; }
hr.wide { margin: 0 5px 0 10px; }
```
